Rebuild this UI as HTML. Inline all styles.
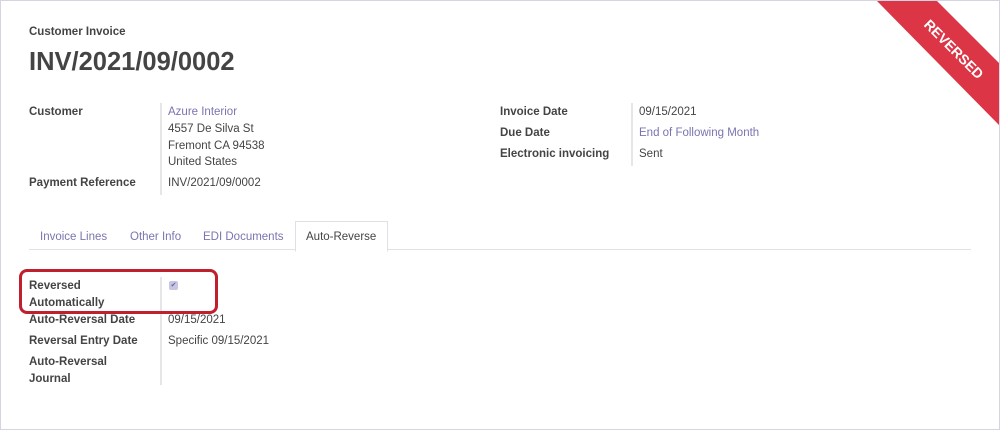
<!DOCTYPE html>
<html><head><style>
body{margin:0;width:1000px;height:430px;overflow:hidden;background:#fff;font-family:"Liberation Sans",sans-serif;color:#444;}
.frame{position:absolute;left:0;top:0;width:998px;height:428px;border:1px solid #d4d4e2;overflow:hidden;}
.a{position:absolute;font-size:11.5px;white-space:nowrap;margin-top:1px;}
.b{font-weight:bold;color:#444;}
.l{color:#7a74b0;}
.v{position:absolute;width:2px;background:#e6e6e6;}
.tab{position:absolute;top:232px;font-size:11.5px;color:#7a74b0;margin-top:1px;}
</style></head><body><div class="frame">
<div class="a b" style="left:28px;top:24px;font-size:11.5px">Customer Invoice</div>
<div class="a b" style="left:28px;top:46px;font-size:25.5px;color:#444">INV/2021/09/0002</div>

<div class="a b" style="left:28px;top:104px">Customer</div>
<div class="v" style="left:159px;top:102px;height:92px"></div>
<div class="a l" style="left:167px;top:104px">Azure Interior</div>
<div class="a" style="left:167px;top:121px">4557 De Silva St</div>
<div class="a" style="left:167px;top:138px">Fremont CA 94538</div>
<div class="a" style="left:167px;top:154px">United States</div>
<div class="a b" style="left:28px;top:175px">Payment Reference</div>
<div class="a" style="left:167px;top:175px">INV/2021/09/0002</div>

<div class="a b" style="left:499px;top:104px">Invoice Date</div>
<div class="a b" style="left:499px;top:125px">Due Date</div>
<div class="a b" style="left:499px;top:146px">Electronic invoicing</div>
<div class="v" style="left:630px;top:102px;height:63px"></div>
<div class="a" style="left:638px;top:104px">09/15/2021</div>
<div class="a l" style="left:638px;top:125px">End of Following Month</div>
<div class="a" style="left:638px;top:146px">Sent</div>

<div style="position:absolute;left:28px;top:248px;width:942px;height:1px;background:#dee2e6"></div>
<div class="tab" style="left:39px;top:229px">Invoice Lines</div>
<div class="tab" style="left:129px;top:229px">Other Info</div>
<div class="tab" style="left:202px;top:229px">EDI Documents</div>
<div style="position:absolute;left:294px;top:220px;width:91px;height:29px;border:1px solid #dee2e6;border-bottom:1px solid #fff;background:#fff"></div>
<div class="tab" style="left:305px;top:229px;color:#444">Auto-Reverse</div>

<div class="a b" style="left:28px;top:278px">Reversed</div>
<div class="a b" style="left:28px;top:295px">Automatically</div>
<div class="v" style="left:159px;top:276px;height:108px"></div>
<div style="position:absolute;left:168px;top:280px;width:9px;height:9px;background:#c8c6e0;border-radius:2px;font-size:7px;color:#6a64a8;line-height:9px;text-align:center">✔</div>
<div style="position:absolute;left:18px;top:268px;width:193px;height:39px;border:3px solid #c0202e;border-radius:8px"></div>
<div class="a b" style="left:28px;top:312px">Auto-Reversal Date</div>
<div class="a" style="left:167px;top:312px">09/15/2021</div>
<div class="a b" style="left:28px;top:333px">Reversal Entry Date</div>
<div class="a" style="left:167px;top:333px">Specific&nbsp;09/15/2021</div>
<div class="a b" style="left:28px;top:354px">Auto-Reversal</div>
<div class="a b" style="left:28px;top:371px">Journal</div>

<svg style="position:absolute;left:0;top:0" width="1000" height="430">
<polygon points="876,0 936,0 998,62 998,124" fill="#dc3545"/>
<text x="0" y="0" transform="translate(952,49) rotate(45)" text-anchor="middle" dominant-baseline="middle" fill="#fff" font-family="Liberation Sans,sans-serif" font-size="14" font-weight="bold">REVERSED</text>
</svg>
</div></body></html>
